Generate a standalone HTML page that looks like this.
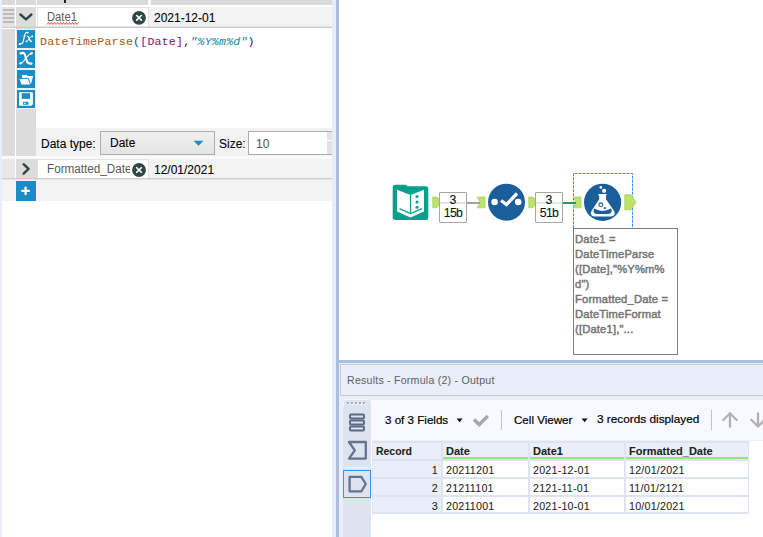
<!DOCTYPE html>
<html><head><meta charset="utf-8">
<style>
*{margin:0;padding:0;box-sizing:border-box}
html,body{width:763px;height:537px;overflow:hidden;background:#fff;font-family:"Liberation Sans",sans-serif;font-size:12px;color:#111}
.a{position:absolute}
.t{position:absolute;white-space:nowrap;line-height:1;-webkit-text-stroke-width:0.08px}
svg{position:absolute;overflow:visible}
</style></head><body>

<!-- ============ LEFT PANE ============ -->
<div class="a" style="left:0;top:0;width:2px;height:537px;background:#e9eef9"></div>

<!-- header strip (clipped) -->
<div class="a" style="left:2px;top:0;width:13px;height:5px;background:#dadada"></div>
<div class="a" style="left:16px;top:0;width:20px;height:5px;background:#dadada"></div>
<div class="a" style="left:37px;top:0;width:111px;height:5px;background:#dadada"></div>
<div class="a" style="left:151px;top:0;width:181px;height:5px;background:#dadada"></div>
<div class="a" style="left:64px;top:0;width:2px;height:3px;background:#222"></div>

<!-- row 1 -->
<div class="a" style="left:2px;top:7px;width:13px;height:20px;background:#e4e4e4"></div>
<div class="a" style="left:3px;top:9px;width:11px;height:2px;background:#bababa"></div>
<div class="a" style="left:3px;top:13px;width:11px;height:2px;background:#bababa"></div>
<div class="a" style="left:3px;top:17px;width:11px;height:2px;background:#bababa"></div>
<div class="a" style="left:3px;top:21px;width:11px;height:2px;background:#bababa"></div>
<div class="a" style="left:16px;top:7px;width:20px;height:20px;background:#dcdcdc"></div>
<svg style="left:0;top:0" width="40" height="30"><path d="M20.4 14.5 L26 19.4 L31.4 14.5" fill="none" stroke="#2d4747" stroke-width="2.4" stroke-linecap="round" stroke-linejoin="round"/></svg>
<div class="a" style="left:37px;top:7px;width:112px;height:20px;background:#fff;border:1px solid #e2e2e2;border-bottom:none"></div>
<div class="a" style="left:149px;top:7px;width:183px;height:20px;background:#f3f3f3"></div>
<div class="a" style="left:2px;top:26px;width:330px;height:1px;background:#e2e2e2"></div><div class="a" style="left:16px;top:26px;width:20px;height:1px;background:#d8d8d8"></div><div class="a" style="left:2px;top:27px;width:330px;height:1px;background:#cbcbcb"></div>
<div class="t" style="left:47px;top:11px;color:#5a5a5a;-webkit-text-stroke-width:0;font-size:12.2px;transform:scaleX(0.92);transform-origin:0 0">Date1</div>
<svg style="left:47px;top:21.6px" width="34" height="4"><path d="M0 2.5 l1.5 -2 l1.5 2 l1.5 -2 l1.5 2 l1.5 -2 l1.5 2 l1.5 -2 l1.5 2 l1.5 -2 l1.5 2 l1.5 -2 l1.5 2 l1.5 -2 l1.5 2 l1.5 -2 l1.5 2 l1.5 -2 l1.5 2 l1.5 -2 l1.5 2 l1.5 -2" fill="none" stroke="#ee3a3a" stroke-width="0.9"/></svg>
<svg style="left:132px;top:11px" width="14" height="14"><circle cx="7" cy="6.8" r="6.9" fill="#2d4a48"/><path d="M4.7 4.5 L9.3 9.1 M9.3 4.5 L4.7 9.1" stroke="#fff" stroke-width="1.6" stroke-linecap="round"/></svg>
<div class="t" style="left:154px;top:12px;font-size:12px;color:#000">2021-12-01</div>

<!-- editor area -->
<div class="a" style="left:2px;top:29px;width:13px;height:127px;background:#dcdcdc"></div>
<div class="a" style="left:16px;top:28px;width:20px;height:128px;background:#dcdcdc"></div>
<div class="a" style="left:16px;top:29px;width:20px;height:80px;background:#f5ede8"></div>
<div class="a" style="left:17px;top:30px;width:18px;height:18px;background:#1a8dc6"></div>
<div class="a" style="left:17px;top:50px;width:18px;height:18px;background:#1a8dc6"></div>
<div class="a" style="left:17px;top:70px;width:18px;height:18px;background:#1a8dc6"></div>
<div class="a" style="left:17px;top:90px;width:18px;height:18px;background:#1a8dc6"></div>
<svg style="left:17px;top:30px" width="18" height="18"><g fill="none" stroke="#fff" stroke-linecap="round"><path d="M10.8 2.4 C9.2 2 8.3 3 7.8 5 L6 12 C5.4 13.8 4 14.3 2.4 14" stroke-width="1.15"/><path d="M6 6 L9.6 6" stroke-width="0.7" opacity="0.55"/><path d="M10.9 6.3 C11.8 6.5 12.2 8 12.6 9.5 C13 11 13.5 11.6 14.6 11.4" stroke-width="1.3"/><path d="M15.3 6.3 C14 6.3 12.5 8 11.5 9.5 C10.8 10.6 10.2 11.4 9.4 11.5" stroke-width="1"/></g><g fill="#fff"><circle cx="10.6" cy="2.6" r="0.95"/><circle cx="2.7" cy="13.9" r="1"/><circle cx="15.2" cy="6.3" r="0.9"/><circle cx="9.5" cy="11.4" r="0.9"/></g></svg>
<svg style="left:17px;top:50px" width="18" height="18"><g fill="none" stroke="#fff" stroke-linecap="round"><path d="M3.6 3.5 C5.5 2.4 7 2.6 7.8 4.6 C8.6 6.6 9.2 9.5 10 11.5 C10.6 13 12 13.8 14.5 13.6" stroke-width="2.1"/><path d="M14.2 3.5 C12.5 3.9 11 5.2 9.2 7.8 L6.8 11 C5.8 12.5 4.6 13.2 3.6 13.3" stroke-width="1.1"/></g><ellipse cx="14.4" cy="3.4" rx="1.6" ry="1.1" fill="#fff" transform="rotate(-20 14.4 3.4)"/><ellipse cx="3.8" cy="13.2" rx="1.7" ry="1.2" fill="#fff" transform="rotate(-20 3.8 13.2)"/></svg>
<svg style="left:17px;top:70px" width="18" height="18"><path d="M5 5.1 L10 5.1 L10.5 5.9 L16.1 5.9 L13.9 14.5 L5 14.5 Z" fill="#fff"/><path d="M1.7 8.4 L11.3 8.4 L13.7 15 L4.2 15 Z" fill="#fff" stroke="#1a8dc6" stroke-width="1"/></svg>
<svg style="left:17px;top:90px" width="18" height="18"><path d="M3 2.2 Q2 2.2 2 3.2 L2 14.8 Q2 15.8 3 15.8 L14.4 15.8 L15.9 14.3 L15.9 3.2 Q15.9 2.2 14.9 2.2 Z" fill="#fff"/><rect x="4.7" y="3.2" width="8.4" height="5.7" fill="#1a8dc6"/><rect x="6" y="11.7" width="5.4" height="3" rx="0.3" fill="#1a8dc6"/><rect x="6.9" y="12.7" width="1.9" height="1.1" fill="#fff"/></svg>

<div class="a" style="left:36px;top:28px;width:296px;height:100px;background:#fff"></div>
<div class="t" style="left:40px;top:36px;font-family:'Liberation Mono',monospace;font-size:11.6px;color:#b0600c;letter-spacing:0.2px">DateTimeParse<span style="color:#1f4494">(</span><span style="color:#8a1a6a">[Date]</span><span style="color:#222">,</span><span style="color:#1f8a96;font-style:italic">"%Y%m%d"</span><span style="color:#4a2070">)</span></div>

<!-- data type bar -->
<div class="a" style="left:36px;top:128px;width:296px;height:28px;background:#f3f3f3"></div>
<div class="t" style="left:41px;top:138px;font-size:12px;color:#000">Data type:</div>
<div class="a" style="left:100px;top:131px;width:115px;height:24px;border:1px solid #adadad;background:linear-gradient(#f0f0f0,#e4e4e4)"></div>
<div class="t" style="left:110px;top:137px;font-size:12px;color:#000">Date</div>
<svg style="left:193px;top:140px" width="12" height="7"><path d="M0.5 0.8 L10.5 0.8 L5.5 5.8 Z" fill="#1a8dc6"/></svg>
<div class="t" style="left:219px;top:138px;font-size:12px;color:#000">Size:</div>
<div class="a" style="left:248px;top:131px;width:90px;height:24px;border:1px solid #acacac;background:#fff"></div>
<div class="a" style="left:327px;top:132px;width:5px;height:8px;background:#e2e2e2"></div>
<div class="a" style="left:327px;top:141px;width:5px;height:13px;background:#e2e2e2"></div>
<div class="t" style="left:256px;top:138px;font-size:12px;color:#555">10</div>

<!-- row 2 -->
<div class="a" style="left:2px;top:156px;width:330px;height:3px;background:#fafafa"></div>
<div class="a" style="left:2px;top:159px;width:13px;height:20px;background:#e8e8e8"></div>
<div class="a" style="left:16px;top:159px;width:22px;height:20px;background:#dcdcdc"></div>
<svg style="left:0;top:150px" width="40" height="30"><path d="M23.6 14.2 L28.6 18.9 L23.6 23.6" fill="none" stroke="#2d4747" stroke-width="2.4" stroke-linecap="round" stroke-linejoin="round"/></svg>
<div class="a" style="left:37px;top:159px;width:112px;height:20px;background:#fff;border:1px solid #e2e2e2;border-bottom:none"></div>
<div class="a" style="left:149px;top:159px;width:183px;height:20px;background:#f3f3f3"></div>
<div class="a" style="left:2px;top:178px;width:330px;height:1px;background:#cfcfcf"></div><div class="a" style="left:2px;top:179px;width:330px;height:1px;background:#e4e4e4"></div>
<div style="position:absolute;left:47px;top:161px;width:83px;height:16px;overflow:hidden"><div class="t" style="left:0;top:2px;font-size:12.3px;color:#5a5a5a;-webkit-text-stroke-width:0;transform:scaleX(0.95);transform-origin:0 0">Formatted_Date</div></div>
<svg style="left:132px;top:163px" width="14" height="14"><circle cx="7" cy="7" r="6.9" fill="#2d4a48"/><path d="M4.7 4.7 L9.3 9.3 M9.3 4.7 L4.7 9.3" stroke="#fff" stroke-width="1.6" stroke-linecap="round"/></svg>
<div class="t" style="left:154px;top:164px;font-size:12px;color:#000">12/01/2021</div>

<!-- plus row -->
<div class="a" style="left:2px;top:180px;width:330px;height:21px;background:#f3f3f3"></div>
<div class="a" style="left:16px;top:181px;width:20px;height:20px;background:#1a8dc6"></div>
<svg style="left:16px;top:181px" width="20" height="20"><path d="M6.3 9.9 L12.9 9.9 M9.6 6.6 L9.6 13.2" stroke="#fff" stroke-width="2.3" stroke-linecap="round"/></svg>


<!-- ============ SPLITTER ============ -->
<div class="a" style="left:332px;top:0;width:4px;height:537px;background:#e9edf7"></div>
<div class="a" style="left:336px;top:0;width:3px;height:537px;background:#abbde0"></div>

<!-- ============ CANVAS ============ -->
<!-- input tool (teal book) -->
<svg style="left:392px;top:184px" width="38" height="37">
  <path d="M0.7 3.2 Q0.7 0.7 3.2 0.7 L13.5 0.7 Q14.5 0.7 15 1.6 L15.4 2.3 L33.8 2.3 Q36.3 2.3 36.3 4.8 L36.3 33.4 Q36.3 35.9 33.8 35.9 L3.2 35.9 Q0.7 35.9 0.7 33.4 Z" fill="#07a08d"/>
  <path d="M5 5.8 L18.5 10.9 L32 5.8 L32 27.5 L18.5 33.5 L5 27.5 Z" fill="#fff"/>
  <path d="M18.5 10.9 L18.5 29.5" stroke="#07a08d" stroke-width="1.2"/>
  <path d="M7.5 24.6 L18.5 29.6 L30 24.6" fill="none" stroke="#07a08d" stroke-width="1.2"/>
  <circle cx="25" cy="12.5" r="1.5" fill="#07a08d"/>
  <circle cx="25" cy="18" r="1.5" fill="#07a08d"/>
  <circle cx="25" cy="23.2" r="1.5" fill="#07a08d"/>
</svg>
<!-- anchor out 1 -->
<svg style="left:432px;top:196px" width="8" height="13"><path d="M0.8 1 L3.5 1 Q7 1 7 6.3 Q7 11.8 3.5 11.8 L0.8 11.8 Z" fill="#bde36c" stroke="#a6cf55" stroke-width="0.8"/></svg>
<!-- box 1 -->
<div class="a" style="left:439px;top:192px;width:28px;height:31px;border:1px solid #a6a6a6;border-radius:1px;background:#fff"></div>
<div class="a" style="left:440px;top:202px;width:26px;height:2px;background:#e4e4e4"></div>

<div class="t" style="left:439px;top:194px;width:28px;text-align:center;font-size:12.3px;color:#111">3</div>
<div class="t" style="left:439px;top:207px;width:28px;text-align:center;font-size:12.3px;color:#111;letter-spacing:-0.6px">15b</div>
<!-- anchor in 2 -->
<svg style="left:477px;top:196px" width="9" height="13"><path d="M0.3 1 L8 1 L8 11.8 L0.3 11.8 L3 6.4 Z" fill="#bde36c" stroke="#a6cf55" stroke-width="0.8"/></svg>
<div class="a" style="left:467px;top:202px;width:13px;height:2px;background:#a0a0a0"></div>
<!-- select tool -->
<svg style="left:487px;top:183px" width="40" height="40">
  <circle cx="19.5" cy="19.2" r="18.5" fill="#1b5e9c"/>
  <circle cx="7.6" cy="19" r="3.3" fill="#fff"/>
  <circle cx="31.2" cy="19" r="3.3" fill="#fff"/>
  <path d="M14 17.5 L19.5 21.5 L30 10.5" fill="none" stroke="#fff" stroke-width="3.3" stroke-linecap="butt" stroke-linejoin="miter"/>
</svg>
<svg style="left:528px;top:196px" width="8" height="13"><path d="M0.8 1 L3.5 1 Q7 1 7 6.3 Q7 11.8 3.5 11.8 L0.8 11.8 Z" fill="#bde36c" stroke="#a6cf55" stroke-width="0.8"/></svg>
<!-- box 2 -->
<div class="a" style="left:535px;top:192px;width:28px;height:31px;border:1px solid #a6a6a6;border-radius:1px;background:#fff"></div>
<div class="a" style="left:536px;top:202px;width:26px;height:2px;background:#d9efdc"></div>

<div class="t" style="left:535px;top:194px;width:28px;text-align:center;font-size:12.3px;color:#111">3</div>
<div class="t" style="left:535px;top:207px;width:28px;text-align:center;font-size:12.3px;color:#111;letter-spacing:-0.6px">51b</div>
<!-- selection rect -->
<svg style="left:573px;top:173px" width="61" height="56"><path d="M0.5 55 L0.5 0.5 L59.5 0.5 L59.5 55" fill="none" stroke="#cfe3fb" stroke-width="1"/><path d="M0.5 55 L0.5 0.5 L59.5 0.5 L59.5 55" fill="none" stroke="#2b8cf2" stroke-width="1" stroke-dasharray="2.6 1.4"/></svg>
<svg style="left:573px;top:196px" width="9" height="13"><path d="M0.3 1 L8 1 L8 11.8 L0.3 11.8 L3 6.4 Z" fill="#bde36c" stroke="#a6cf55" stroke-width="0.8"/></svg>
<div class="a" style="left:563px;top:202px;width:13px;height:2px;background:#2a9e4e"></div>
<!-- formula tool -->
<svg style="left:582px;top:181px" width="42" height="42">
  <circle cx="20.6" cy="21.3" r="18.6" fill="#1b5e9c"/>
  <circle cx="18.8" cy="6.4" r="1.3" fill="#fff"/>
  <circle cx="22.1" cy="9.8" r="2.1" fill="#fff"/>
  <path d="M16.4 12.9 L24.6 12.9 L24.6 14.6 L24 14.6 L24 18.3 L31.8 29.5 Q33.6 32.5 32 34.3 Q31 35.6 28.5 35.6 L13 35.6 Q10.5 35.6 9.6 34.3 Q8 32.5 9.8 29.5 L17.2 18.3 L17.2 14.6 L16.4 14.6 Z" fill="#fff"/>
  <path d="M12.3 27.6 Q20.6 32.5 28.9 27.6 Q30.3 28.8 29.6 30.8 Q28.8 33 26.5 33 L14.7 33 Q12.4 33 11.6 30.8 Q11 28.8 12.3 27.6 Z" fill="#1b5e9c"/>
  <circle cx="18.8" cy="23.8" r="1.9" fill="none" stroke="#1b5e9c" stroke-width="1.1"/>
  <circle cx="22.9" cy="27.1" r="1.1" fill="#1b5e9c"/>
</svg>
<svg style="left:624px;top:194px" width="13" height="17"><path d="M0.8 0.8 L7 0.8 L12 8.3 L7 15.8 L0.8 15.8 Z" fill="#bde36c" stroke="#a6cf55" stroke-width="0.8"/></svg>
<!-- annotation -->
<div class="a" style="left:573px;top:228px;width:105px;height:127px;border:1px solid #7c7c7c;background:#fff"></div>
<div class="a" style="left:575px;top:232px;font-size:11.2px;line-height:15px;letter-spacing:0.17px;color:#747474;-webkit-text-stroke:0.45px #747474;white-space:nowrap">Date1 =<br>DateTimeParse<br>([Date],"%Y%m%<br>d")<br>Formatted_Date =<br>DateTimeFormat<br>([Date1],"...</div>

<!-- ============ RESULTS ============ -->
<div class="a" style="left:339px;top:360px;width:424px;height:3px;background:#abbde0"></div>
<div class="a" style="left:339px;top:363px;width:424px;height:174px;background:#e9eef9"></div>
<div class="a" style="left:340px;top:364px;width:423px;height:32px;border:1px solid #c9c9c9;border-right:none;background:#e9eef8"></div>
<div class="t" style="left:347px;top:375px;font-size:10.6px;letter-spacing:0.23px;color:#5e5e66;-webkit-text-stroke-width:0">Results - Formula (2) - Output</div>

<!-- sidebar -->
<div class="a" style="left:343px;top:399px;width:28px;height:138px;background:#dde3ef;border-radius:3px 3px 0 0"></div>
<svg style="left:343px;top:399px" width="28" height="138">
  <path d="M0.5 8 L0.5 3 Q0.5 0.5 3 0.5 L25 0.5 Q27.5 0.5 27.5 3" fill="none" stroke="#f3f5fa" stroke-width="1"/>
  <g fill="#fbfcfe"><rect x="4.8" y="3.8" width="2" height="2"/><rect x="8.8" y="3.8" width="2" height="2"/><rect x="12.8" y="3.8" width="2" height="2"/><rect x="16.8" y="3.8" width="2" height="2"/><rect x="20.8" y="3.8" width="2" height="2"/></g><g fill="#a8abb2"><rect x="4" y="3" width="2" height="2"/><rect x="8" y="3" width="2" height="2"/><rect x="12" y="3" width="2" height="2"/><rect x="16" y="3" width="2" height="2"/><rect x="20" y="3" width="2" height="2"/></g>
  <g fill="none" stroke="#5b6a8a" stroke-width="2"><rect x="7" y="15.5" width="14" height="4" rx="1"/><rect x="7" y="21.5" width="14" height="4" rx="1"/><rect x="7" y="27.5" width="14" height="4" rx="1"/></g>
  <path d="M6 43 L22.8 43 L22.8 59.6 L6 59.6 L11.8 51.3 Z" fill="none" stroke="#63728f" stroke-width="2.3" stroke-linejoin="round"/>
  <rect x="2" y="68" width="24" height="1.2" fill="#f4f6fb"/>
  <rect x="0.5" y="71.5" width="27" height="27" fill="none" stroke="#3d8fe8" stroke-width="1"/>
  <path d="M6.6 77.8 L18.3 77.8 L22.8 85 L18.3 92.3 L6.6 92.3 Z" fill="none" stroke="#63728f" stroke-width="2.3" stroke-linejoin="round"/>
</svg>

<!-- toolbar -->
<div class="a" style="left:371px;top:400px;width:392px;height:40px;background:#f7f9fe;border-left:1px solid #fbfcff;border-radius:2px 0 0 0"></div>
<div class="t" style="left:385px;top:414px;font-size:11.6px;color:#000;-webkit-text-stroke-width:0.2px">3 of 3 Fields</div>
<svg style="left:456px;top:418px" width="8" height="6"><path d="M0.6 0.6 L6.6 0.6 L3.6 4.3 Z" fill="#111"/></svg>
<svg style="left:471px;top:412px" width="20" height="16"><path d="M3 7.6 L8.2 12.6 L16.8 4" fill="none" stroke="#a6a6a6" stroke-width="3.4"/></svg>
<div class="a" style="left:501px;top:410px;width:1px;height:20px;background:#c2c2c2"></div>
<div class="t" style="left:514px;top:414px;font-size:11.6px;color:#000;-webkit-text-stroke-width:0.2px">Cell Viewer</div>
<svg style="left:581px;top:418px" width="8" height="6"><path d="M0.6 0.6 L6.6 0.6 L3.6 4.3 Z" fill="#111"/></svg>
<div class="t" style="left:597px;top:414px;font-size:11.8px;color:#000;-webkit-text-stroke-width:0.2px">3 records displayed</div>
<div class="a" style="left:711px;top:410px;width:1px;height:20px;background:#c2c2c2"></div>
<svg style="left:720px;top:410px" width="20" height="20"><path d="M10 3.2 L10 16.8 M3.3 10 L10 3.2 L16.7 10" fill="none" stroke="#b2b2b2" stroke-width="2.3" stroke-linecap="round" stroke-linejoin="round"/></svg>
<svg style="left:748px;top:410px" width="20" height="20"><path d="M10 3.5 L10 16.5 M3.3 9.8 L10 16.5 L16.7 9.8" fill="none" stroke="#b2b2b2" stroke-width="2.3" stroke-linecap="round" stroke-linejoin="round"/></svg>

<!-- grid -->
<div class="a" style="left:371px;top:440px;width:392px;height:97px;background:#fff"></div><div class="a" style="left:372px;top:440px;width:391px;height:1px;background:#eef0f3"></div>
<div class="a" style="left:372px;top:441px;width:377px;height:73px;background:#dde3ef"></div>
<!-- header -->
<div class="a" style="left:373px;top:443px;width:68px;height:16px;background:#e9eef8"></div>
<div class="a" style="left:443px;top:443px;width:85px;height:16px;background:#e9eef8"></div>
<div class="a" style="left:530px;top:443px;width:94px;height:16px;background:#e9eef8"></div>
<div class="a" style="left:626px;top:443px;width:122px;height:16px;background:#e9eef8"></div>
<div class="a" style="left:443px;top:457px;width:85px;height:2px;background:#8cec74"></div>
<div class="a" style="left:530px;top:457px;width:94px;height:2px;background:#8cec74"></div>
<div class="a" style="left:626px;top:457px;width:122px;height:2px;background:#8cec74"></div>
<!-- rows -->
<div class="a" style="left:373px;top:461px;width:68px;height:16px;background:#e9eef8"></div>
<div class="a" style="left:443px;top:461px;width:85px;height:16px;background:#fff"></div>
<div class="a" style="left:530px;top:461px;width:94px;height:16px;background:#fff"></div>
<div class="a" style="left:626px;top:461px;width:122px;height:16px;background:#fff"></div>
<div class="a" style="left:373px;top:479px;width:68px;height:16px;background:#e9eef8"></div>
<div class="a" style="left:443px;top:479px;width:85px;height:16px;background:#fff"></div>
<div class="a" style="left:530px;top:479px;width:94px;height:16px;background:#fff"></div>
<div class="a" style="left:626px;top:479px;width:122px;height:16px;background:#fff"></div>
<div class="a" style="left:373px;top:497px;width:68px;height:15px;background:#e9eef8"></div>
<div class="a" style="left:443px;top:497px;width:85px;height:15px;background:#fff"></div>
<div class="a" style="left:530px;top:497px;width:94px;height:15px;background:#fff"></div>
<div class="a" style="left:626px;top:497px;width:122px;height:15px;background:#fff"></div>

<div class="t" style="left:376px;top:446px;font-size:11px;font-weight:bold;color:#222;transform:scaleX(0.95);transform-origin:0 0">Record</div>
<div class="t" style="left:446px;top:446px;font-size:11px;font-weight:bold;color:#222">Date</div>
<div class="t" style="left:533px;top:446px;font-size:11px;font-weight:bold;color:#222">Date1</div>
<div class="t" style="left:629px;top:446px;font-size:11px;font-weight:bold;color:#222">Formatted_Date</div>

<div class="t" style="left:373px;top:465px;width:65px;text-align:right;font-size:10.7px;letter-spacing:0.22px;-webkit-text-stroke-width:0.05px;color:#1a1a1a">1</div>
<div class="t" style="left:446px;top:465px;font-size:10.7px;letter-spacing:0.22px;-webkit-text-stroke-width:0.05px;color:#1a1a1a">20211201</div>
<div class="t" style="left:533px;top:465px;font-size:10.7px;letter-spacing:0.22px;-webkit-text-stroke-width:0.05px;color:#1a1a1a">2021-12-01</div>
<div class="t" style="left:629px;top:465px;font-size:10.7px;letter-spacing:0.22px;-webkit-text-stroke-width:0.05px;color:#1a1a1a">12/01/2021</div>
<div class="t" style="left:373px;top:483px;width:65px;text-align:right;font-size:10.7px;letter-spacing:0.22px;-webkit-text-stroke-width:0.05px;color:#1a1a1a">2</div>
<div class="t" style="left:446px;top:483px;font-size:10.7px;letter-spacing:0.22px;-webkit-text-stroke-width:0.05px;color:#1a1a1a">21211101</div>
<div class="t" style="left:533px;top:483px;font-size:10.7px;letter-spacing:0.22px;-webkit-text-stroke-width:0.05px;color:#1a1a1a">2121-11-01</div>
<div class="t" style="left:629px;top:483px;font-size:10.7px;letter-spacing:0.22px;-webkit-text-stroke-width:0.05px;color:#1a1a1a">11/01/2121</div>
<div class="t" style="left:373px;top:501px;width:65px;text-align:right;font-size:10.7px;letter-spacing:0.22px;-webkit-text-stroke-width:0.05px;color:#1a1a1a">3</div>
<div class="t" style="left:446px;top:501px;font-size:10.7px;letter-spacing:0.22px;-webkit-text-stroke-width:0.05px;color:#1a1a1a">20211001</div>
<div class="t" style="left:533px;top:501px;font-size:10.7px;letter-spacing:0.22px;-webkit-text-stroke-width:0.05px;color:#1a1a1a">2021-10-01</div>
<div class="t" style="left:629px;top:501px;font-size:10.7px;letter-spacing:0.22px;-webkit-text-stroke-width:0.05px;color:#1a1a1a">10/01/2021</div>

</body></html>
